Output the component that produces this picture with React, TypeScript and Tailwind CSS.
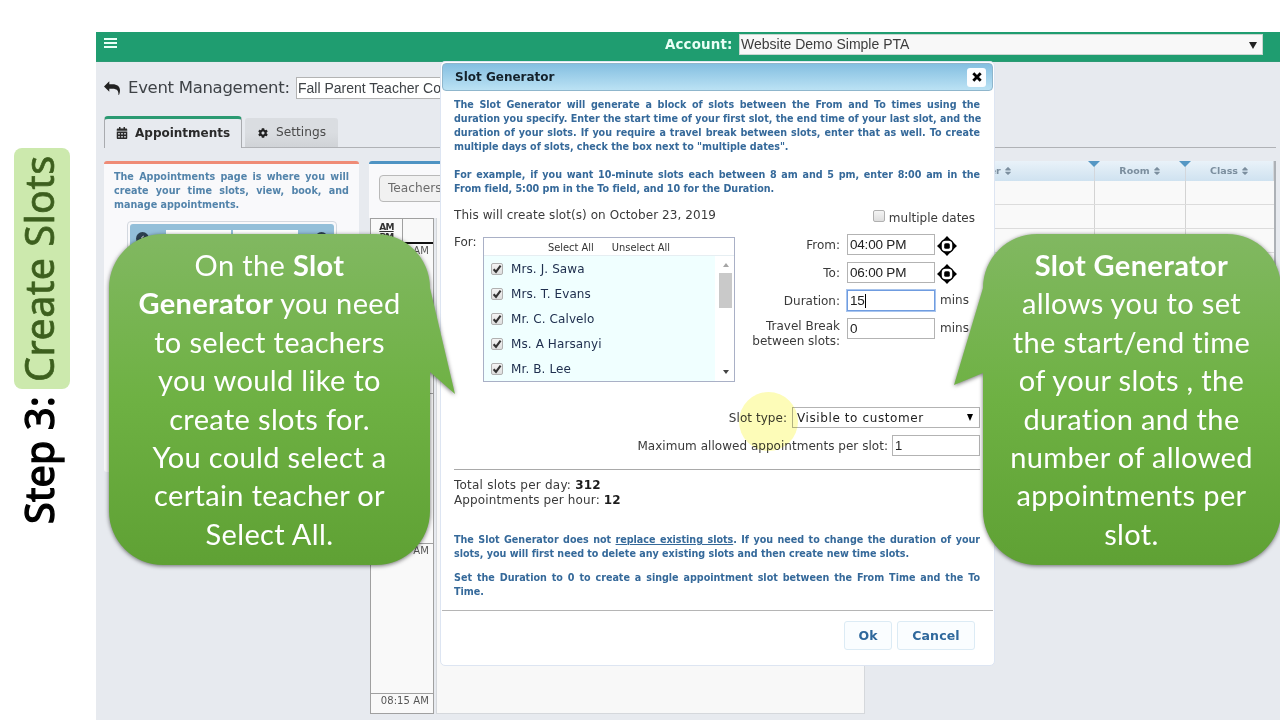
import type { ReactNode } from 'react';
import { FaCog, FaCalendarAlt, FaSort } from 'react-icons/fa';

const teachers = ['Mrs. J. Sawa', 'Mrs. T. Evans', 'Mr. C. Calvelo', 'Ms. A Harsanyi', 'Mr. B. Lee'];
const hours = ['07:30 AM', '07:45 AM', '08:00 AM'];

// One fully justified line of bold blue help text
function HelpLine({ children, last = false }: { children: ReactNode; last?: boolean }) {
  return (
    <div className={`h-[14px] leading-[14px] whitespace-nowrap ${last ? '' : '[text-align-last:justify]'}`}>{children}</div>
  );
}

function Help({ className = '', children }: { className?: string; children: ReactNode }) {
  return <div className={`text-[9.600px] font-bold tracking-[-0.02px] text-[#35699a] ${className}`}>{children}</div>;
}

function Checkbox({ checked = false }: { checked?: boolean }) {
  return (
    <span className="block w-3 h-3 rounded-[2px] border border-[#b0b0b0] bg-linear-to-b from-[#f4f4f4] to-[#dedede]">
      {checked && (
        <svg viewBox="0 0 10 10" className="w-[10px] h-[10px]">
          <path d="M1.6 5.2 4 7.8 8.6 1.6" fill="none" stroke="#333" strokeWidth="2.1" />
        </svg>
      )}
    </span>
  );
}

function TimePickerIcon() {
  return (
    <svg viewBox="0 0 20 20" className="w-5 h-5">
      <path d="M10 0 15 5.2H5ZM10 20 5 14.800H15ZM0 10 5.200 5V15ZM20 10 14.800 15V5Z" fill="#000" />
      <rect x="4" y="4" width="12" height="12" rx="4.500" fill="#fff" stroke="#000" strokeWidth="1.500" />
      <rect x="7.200" y="7.200" width="5.600" height="5.600" rx="1.500" fill="#000" />
    </svg>
  );
}

function ReplyIcon() {
  return (
    <svg viewBox="0 0 16 14" className="w-4 h-[14px]">
      <path d="M0 5.500 5.300 0.300V3.300H8.500C13.200 3.300 16 5.400 16 9.400C16 11 15.600 12.600 15 13.900H14.500C14.700 9.800 12.900 7.800 8.500 7.800H5.300V10.800Z" fill="#222" />
    </svg>
  );
}

function Field({ label, value, focus = false, children }: { label: ReactNode; value: string; focus?: boolean; children: ReactNode }) {
  return (
    <div className="flex h-[21px] mb-[7px]">
      <div className="w-[105px] text-right leading-[15px] pt-1 whitespace-nowrap">{label}</div>
      <div
        className={`ml-[7px] w-[88px] h-[21px] border pl-[2px] leading-[19px] font-['Liberation_Sans'] text-[13.5px] tracking-[-0.2px] text-[#222] flex items-center bg-white ${
          focus ? 'border-[#6f9ce0] outline outline-1 outline-[#a9c5ee]' : 'border-[#b3b3b3]'
        }`}
      >
        {value}
        {focus && <span className="w-px h-[14px] bg-black" />}
      </div>
      {children}
    </div>
  );
}

function TopBar() {
  return (
    <header className="h-[30px] bg-[#1f9d70] flex items-start pl-2 pr-[17px] border-b border-[#2c9a74]">
      <div className="w-[13px] mt-[6px] flex flex-col gap-[2px]">
        <span className="h-[2px] bg-[#eafff6]" />
        <span className="h-[2px] bg-[#eafff6]" />
        <span className="h-[2px] bg-[#eafff6]" />
      </div>
      <span className="ml-auto mt-[3px] w-[69px] text-[13.400px] tracking-[0.15px] leading-5 font-bold text-[#e9fff6] whitespace-nowrap">Account:</span>
      <div className="ml-[5px] mt-[2px] w-[524px] h-[21px] bg-[#f8f8f8] border border-[#c9d6d0] pl-px pr-[5px] flex items-center justify-between font-['Liberation_Sans'] text-[14px] text-[#3c3c3c]">
        <span>Website Demo Simple PTA</span>
        <span className="w-0 h-0 mt-px border-x-[4px] border-x-transparent border-t-[7px] border-t-[#222]" />
      </div>
    </header>
  );
}

function Tabs() {
  return (
    <div className="flex items-end h-8 mt-[17px]">
      <div className="w-[138px] h-8 flex items-center border-x border-[#a9abaf] border-t-[3px] border-t-[#2b9a72] rounded-t-[4px] pl-[11px] pb-[2px] text-[12px] font-bold text-[#2a2a2a]">
        <FaCalendarAlt className="w-3 h-3 mr-[7px]" />
        Appointments
      </div>
      <div className="h-8 w-[3px] border-b border-[#b0b2b6]" />
      <div className="w-[93px] h-[30px] flex items-center bg-linear-to-b from-[#dadde1] from-50% to-[#d0d3d7] border-b border-[#b0b2b6] rounded-t-[3px] pl-[13px] text-[12.200px] text-[#4a4a4a]">
        <FaCog className="w-[10px] h-[10px] mr-2 text-[#222]" />
        Settings
      </div>
      <div className="flex-1 h-8 border-b border-[#b0b2b6]" />
    </div>
  );
}

function IntroPanel() {
  return (
    <section className="w-[255px] h-[311px] shrink-0 bg-[#f9f9fb] border-t-[3px] border-t-[#ef8b76] rounded-[3px] px-[10px] pt-[6px]">
      <div className="text-[9.600px] font-bold text-[#5384ab]">
        <HelpLine>The Appointments page is where you will</HelpLine>
        <HelpLine>create your time slots, view, book, and</HelpLine>
        <HelpLine last>manage appointments.</HelpLine>
      </div>
      <div className="ml-[13px] mt-[9px] w-[210px] h-[190px] border border-[#d3d8df] rounded-[4px] p-[2px]">
        <div className="h-[30px] bg-[#93bfd9] rounded-t-[3px] flex justify-between px-[6px] pt-2">
          <span className="w-[13px] h-[13px] rounded-full bg-[#2d4150] text-white text-[10px] leading-[12px] text-center">‹</span>
          <div className="flex gap-[2px] mt-[-2px]">
            <span className="w-[65px] h-4 bg-white" />
            <span className="w-[65px] h-4 bg-white" />
          </div>
          <span className="w-[13px] h-[13px] rounded-full bg-[#2d4150] text-white text-[10px] leading-[12px] text-center">›</span>
        </div>
      </div>
    </section>
  );
}

function SchedulePanel() {
  return (
    <section className="w-[496px] shrink-0">
      <div className="h-[57px] bg-[#f9f9fb] border-t-[3px] border-t-[#4e93c3] rounded-t-[3px] pt-[11px] pl-[10px]">
        <div className="w-[120px] h-[27px] border border-[#b9b9b9] bg-[#f1f1f1] rounded-[4px] pl-2 leading-[25px] text-[12.200px] text-[#6b6b6b]">
          Teachers
        </div>
      </div>
      <div className="flex h-[496px] ml-px">
        <div className="w-16 shrink-0 border border-[#a0a0a0] bg-[#f9f9f9] text-[10px] tracking-[0.1px] text-[#555]">
          <div className="h-[25px] flex border-b-2 border-b-[#111]">
            <div className="w-8 border-r border-[#a0a0a0] pt-[3px] text-center text-[9px] leading-[10px] font-bold tracking-[-0.8px] text-[#333]">
              <div className="underline">AM</div>
              <div>PM</div>
            </div>
          </div>
          {hours.map((hour) => (
            <div key={hour} className="h-[150px] border-b border-[#a0a0a0] pr-1 leading-[14px] text-right">
              {hour}
            </div>
          ))}
          <div className="pr-1 leading-[14px] text-right">08:15 AM</div>
        </div>
        <div className="flex-1 ml-[2px] bg-[#f8f8f8] border-l border-b border-r border-[#d5d8dc]" />
      </div>
    </section>
  );
}

function SlotsTable() {
  const heading = "relative flex items-center justify-center gap-[3px] text-[9.500px] font-bold text-[#7b8e9e] border-r border-[#d3d7dc]";
  const marker = "absolute -right-[6px] top-0 w-0 h-0 border-x-[6px] border-x-transparent border-t-[6px] border-t-[#5597c4]";
  return (
    <section className="ml-1 flex-1 border-r-2 border-[#adb1b6] h-[117px]">
      <div className="grid grid-cols-[1fr_91px_88px] h-5 bg-linear-to-b from-[#e9f2f9] to-[#cfe2f0]">
        <div className={heading}>
          <span className="ml-[8px]">Teacher</span>
          <FaSort className="w-2 h-[10px]" />
          <span className={marker} />
        </div>
        <div className={heading}>
          Room <FaSort className="w-2 h-[10px]" />
          <span className={marker} />
        </div>
        <div className={heading}>
          Class <FaSort className="w-2 h-[10px]" />
        </div>
      </div>
      {[1, 2, 3, 4].map((row) => (
        <div key={row} className="grid grid-cols-[1fr_91px_88px] h-6 bg-[#f9f9f9] border-b border-[#dcdcdc]">
          <div className="border-r border-[#d3d3d3]" />
          <div className="border-r border-[#d3d3d3]" />
          <div />
        </div>
      ))}
    </section>
  );
}

function TeacherList() {
  return (
    <div className="w-[252px] h-[145px] border border-[#a9b0c6] bg-white">
      <div className="h-[18px] border-b border-[#e6eef2] flex justify-center gap-[18px] pt-[2px] text-[9.900px] leading-4 text-[#333] whitespace-nowrap">
        <span>Select All</span>
        <span>Unselect All</span>
      </div>
      <div className="flex h-[125px]">
        <div className="w-[231px] bg-[#f0ffff]">
          {teachers.map((name) => (
            <div key={name} className="h-[25px] flex items-center pl-[7px] gap-2 text-[12px] tracking-[0.1px] text-[#20304f]">
              <Checkbox checked />
              {name}
            </div>
          ))}
        </div>
        <div className="flex-1 flex flex-col items-center pl-[2px] bg-white">
          <span className="mt-[7px] w-0 h-0 border-x-[3.500px] border-x-transparent border-b-[4px] border-b-[#a5a5a5]" />
          <span className="mt-[6px] w-[13px] h-[35px] bg-[#c9c9c9]" />
          <span className="mt-auto mb-[7px] w-0 h-0 border-x-[3.500px] border-x-transparent border-t-[4px] border-t-[#444]" />
        </div>
      </div>
    </div>
  );
}

function SlotGenerator() {
  return (
    <div className="absolute left-[440px] top-[61px] w-[555px] h-[605px] bg-white border border-[#dde5f2] rounded-[5px] p-px text-[12px] text-[#3a3a3a]">
      <div className="h-7 flex items-center justify-between pl-3 pr-[6px] rounded-[4px] border border-[#8fb6cc] bg-linear-to-b from-[#84bfe1] to-[#bbe2f4]">
        <span className="text-[12px] font-bold text-[#13212b]">Slot Generator</span>
        <span className="w-[19px] h-[19px] rounded-[3px] bg-[#fbfdff] flex items-center justify-center">
          <svg viewBox="0 0 10 10" className="w-[10px] h-[10px]">
            <path d="M1.300 1.300 8.700 8.700M8.700 1.300 1.300 8.700" stroke="#000" strokeWidth="2.800" />
          </svg>
        </span>
      </div>

      <div className="pl-3 pr-[13px]">
        <Help className="pt-[7px]">
          <HelpLine>The Slot Generator will generate a block of slots between the From and To times using the</HelpLine>
          <HelpLine>duration you specify. Enter the start time of your first slot, the end time of your last slot, and the</HelpLine>
          <HelpLine>duration of your slots. If you require a travel break between slots, enter that as well. To create</HelpLine>
          <HelpLine last>multiple days of slots, check the box next to "multiple dates".</HelpLine>
        </Help>
        <Help className="mt-[14px]">
          <HelpLine>For example, if you want 10-minute slots each between 8 am and 5 pm, enter 8:00 am in the</HelpLine>
          <HelpLine last>From field, 5:00 pm in the To field, and 10 for the Duration.</HelpLine>
        </Help>

        <div className="flex justify-between h-6 mt-[9px] pr-[5px] leading-5">
          <span className="tracking-[0.07px]">This will create slot(s) on October 23, 2019</span>
          <span className="flex gap-1 pt-[5px]">
            <Checkbox />
            <span className="mt-[-2px]">multiple dates</span>
          </span>
        </div>

        <div className="flex h-[145px] mt-2">
          <span className="w-[29px] leading-none mt-[-1px]">For:</span>
          <TeacherList />
          <div className="mt-[-3px]">
            <Field label="From:" value="04:00 PM">
              <span className="ml-[2px] mt-[2px]"><TimePickerIcon /></span>
            </Field>
            <Field label="To:" value="06:00 PM">
              <span className="ml-[2px] mt-[2px]"><TimePickerIcon /></span>
            </Field>
            <Field label="Duration:" value="15" focus>
              <span className="ml-[5px] leading-[21px]">mins</span>
            </Field>
            <Field label={<div className="mt-[-3px]">Travel Break<br />between slots:</div>} value="0">
              <span className="ml-[5px] leading-[21px]">mins</span>
            </Field>
          </div>
        </div>

        <div className="flex justify-end items-center mt-[25px] h-[21px]">
          <span className="mr-[5px] tracking-[0.05px]">Slot type:</span>
          <div className="w-[188px] h-[21px] border border-[#b3b3b3] flex items-center justify-between pl-1 pr-[6px] tracking-[0.600px] text-[#222]">
            Visible to customer
            <span className="w-0 h-0 border-x-[3.500px] border-x-transparent border-t-[7px] border-t-black" />
          </div>
        </div>
        <div className="flex justify-end items-center mt-[7px] h-[21px]">
          <span className="mr-1 tracking-[0.03px]">Maximum allowed appointments per slot:</span>
          <div className="w-[88px] h-[21px] border border-[#b3b3b3] pl-[2px] leading-5 font-['Liberation_Sans'] text-[13px] text-[#222]">1</div>
        </div>

        <div className="mt-[13px] h-px bg-[#a9a9a9]" />
        <div className="mt-2 leading-[15px]">
          <div className="tracking-[0.230px]">Total slots per day: <b className="text-[#1c1c1c]">312</b></div>
          <div className="tracking-[0.130px]">Appointments per hour: <b className="text-[#1c1c1c]">12</b></div>
        </div>

        <Help className="mt-[25px]">
          <HelpLine>
            The Slot Generator does not <span className="underline">replace existing slots</span>. If you need to change the duration of your
          </HelpLine>
          <HelpLine last>slots, you will first need to delete any existing slots and then create new time slots.</HelpLine>
        </Help>
        <Help className="mt-[10px]">
          <HelpLine>Set the Duration to 0 to create a single appointment slot between the From Time and the To</HelpLine>
          <HelpLine last>Time.</HelpLine>
        </Help>
      </div>

      <div className="mt-[11px] border-t border-[#b5b5b5] pt-[10px] pr-[18px] flex justify-end gap-[5px] text-[12.500px] font-bold text-[#2f689c]">
        <div className="w-12 h-[29px] border border-[#dcebf5] rounded-[3px] bg-[#fafdff] flex items-center justify-center pt-px">Ok</div>
        <div className="w-[78px] h-[29px] border border-[#dcebf5] rounded-[3px] bg-[#fafdff] flex items-center justify-center pt-px tracking-[0.150px]">Cancel</div>
      </div>
    </div>
  );
}

// Green speech bubble outline; the text sits on top of it
function Bubble({ id, d, width }: { id: string; d: string; width: number }) {
  return (
    <svg width={width} height="345" className="absolute left-0 top-0 overflow-visible drop-shadow-[0_1px_2px_rgba(0,0,0,0.55)]">
      <defs>
        <linearGradient id={id} x1="0" y1="0" x2="0" y2="1">
          <stop offset="0" stopColor="#81b861" />
          <stop offset="0.5" stopColor="#6eb143" />
          <stop offset="1" stopColor="#5fa134" />
        </linearGradient>
      </defs>
      <path d={d} fill={`url(#${id})`} />
    </svg>
  );
}

export default function App() {
  return (
    <div className="relative w-[1280px] h-[720px] overflow-hidden bg-white flex font-['DejaVu_Sans',sans-serif]">
      <aside className="w-24 shrink-0 pl-[14px] pt-[148px] font-['Noto_Sans',sans-serif] text-[39.500px] leading-[50px]">
        <div className="w-14 h-[380px] flex flex-col">
          <div className="h-[241px] w-14 shrink-0 rounded-[8px] bg-[#cce9ad] text-[#3d5f1e] [writing-mode:vertical-rl] rotate-180 text-center tracking-[0.500px] whitespace-nowrap [-webkit-text-stroke:0.700px]">
            Create Slots
          </div>
          <div className="h-[135px] w-14 shrink-0 text-black [writing-mode:vertical-rl] rotate-180 tracking-[0.250px] whitespace-nowrap [-webkit-text-stroke:1.400px]">
            Step 3:
          </div>
        </div>
      </aside>

      <main className="flex-1 min-w-0 mt-8 bg-[#e7eaef]">
        <TopBar />
        <div className="pl-2 pr-1 pt-[15px]">
          <div className="flex h-[22px] items-center text-[#3f4347]">
            <ReplyIcon />
            <span className="ml-2 w-[168px] text-[16.500px] tracking-[-0.3px] whitespace-nowrap">Event Management:</span>
            <div className="w-[300px] h-[22px] border border-[#b3b3b3] bg-white pl-[1px] leading-5 font-['Liberation_Sans'] text-[14px]">
              Fall Parent Teacher Conferences
            </div>
          </div>
          <Tabs />
          <div className="flex mt-[13px]">
            <IntroPanel />
            <div className="w-[10px] shrink-0" />
            <SchedulePanel />
            <SlotsTable />
          </div>
        </div>
      </main>

      <SlotGenerator />
      <div className="absolute left-[739px] top-[392px] w-[59px] h-[59px] rounded-full bg-[#fdfcb8] mix-blend-multiply" />

      <div className="absolute left-[109px] top-[234px] w-[321px] h-[331px]">
        <Bubble
          id="bubbleLeft"
          width={346}
          d="M54 0H267A54 54 0 0 1 321 54L346 160L321 138V277A54 54 0 0 1 267 331H54A54 54 0 0 1 0 277V54A54 54 0 0 1 54 0Z"
        />
        <div className="relative pt-[12px] text-center text-white font-['Lato',sans-serif] text-[29px] leading-[38.400px] tracking-[0.350px] whitespace-nowrap">
          On the <b>Slot</b><br />
          <b>Generator</b> you need<br />
          to select teachers<br />
          you would like to<br />
          create slots for.<br />
          You could select a<br />
          certain teacher or<br />
          Select All.
        </div>
      </div>

      <div className="absolute left-[983px] top-[234px] w-[297px] h-[331px]">
        <Bubble
          id="bubbleRight"
          width={297}
          d="M54 0H244A54 54 0 0 1 298 54V277A54 54 0 0 1 244 331H54A54 54 0 0 1 0 277V139L-29 151L0 54A54 54 0 0 1 54 0Z"
        />
        <div className="relative pt-[12px] text-center text-white font-['Lato',sans-serif] text-[29px] leading-[38.400px] tracking-[0.350px] whitespace-nowrap">
          <b>Slot Generator</b><br />
          allows you to set<br />
          the start/end time<br />
          of your slots , the<br />
          duration and the<br />
          number of allowed<br />
          appointments per<br />
          slot.
        </div>
      </div>
    </div>
  );
}
